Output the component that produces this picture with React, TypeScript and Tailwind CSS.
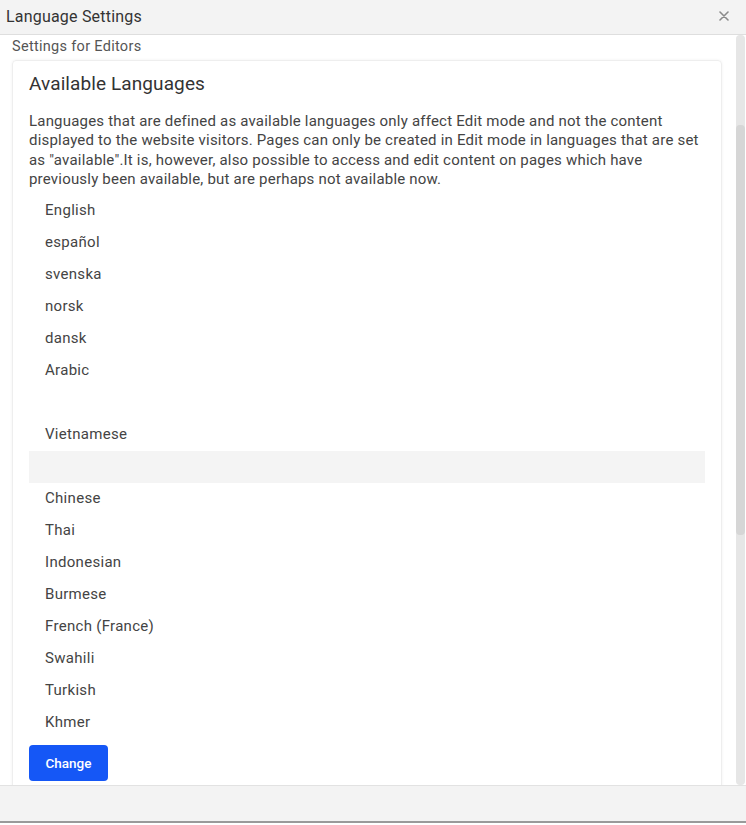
const languages = [
  'English',
  'español',
  'svenska',
  'norsk',
  'dansk',
  'Arabic',
  '',
  'Vietnamese',
  '',
  'Chinese',
  'Thai',
  'Indonesian',
  'Burmese',
  'French (France)',
  'Swahili',
  'Turkish',
  'Khmer',
];

// index of the row that shows the hover background
const hoverRow = 8;

export default function App(): JSX.Element {
  return (
    <div className="h-[825px] w-[746px] bg-white font-['Roboto',sans-serif] text-[#333] flex flex-col overflow-hidden">
      <div className="h-[35px] shrink-0 bg-[#f3f3f3] border-b border-[#dedede] flex items-center justify-between pl-[6px] pr-[17px]">
        <span className="text-[16px] tracking-[0.2px] text-[#333]">Language Settings</span>
        <svg width="10" height="10" viewBox="0 0 10 10" className="mb-[2px]">
          <path d="M1 1L9 9M9 1L1 9" stroke="#8a8a8a" strokeWidth="1.6" strokeLinecap="round" />
        </svg>
      </div>

      <div className="h-[750px] shrink-0 flex overflow-hidden">
        <div className="flex-1 overflow-hidden pl-[12px] pr-[14px]">
          <div className="text-[14.5px] tracking-[0.3px] text-[#555] pt-[2px] h-[25px] leading-[20px]">
            Settings for Editors
          </div>
          <div className="rounded-[4px] border border-[#eeeeee] shadow-[0_0_3px_rgba(0,0,0,0.06)] pl-[16px] pr-[16px] pt-[10px] pb-[20px]">
            <h2 className="text-[19px] tracking-[0.1px] text-[#333] leading-[26px] mb-[15px]">
              Available Languages
            </h2>
            <p className="text-[15px] tracking-[0.2px] leading-[19.4px] text-[#444] mb-[5px] whitespace-nowrap">
              Languages that are defined as available languages only affect Edit mode and not the content
              <br />
              displayed to the website visitors. Pages can only be created in Edit mode in languages that are set
              <br />
              as "available".It is, however, also possible to access and edit content on pages which have
              <br />
              previously been available, but are perhaps not available now.
            </p>
            <ul className="flex flex-col">
              {languages.map((lang, index) => (
                <li
                  key={index}
                  className={[
                    'h-[32px] flex items-center pl-[16px] text-[15px] tracking-[0.3px] text-[#444]',
                    index === hoverRow ? 'bg-[#f4f4f4]' : '',
                  ].join(' ')}
                >
                  {lang}
                </li>
              ))}
            </ul>
            <button className="mt-[6px] h-[36px] w-[79px] rounded-[4px] bg-[#1557f6] text-white text-[13.5px] font-medium">
              Change
            </button>
          </div>
        </div>
        <div className="w-[9px] shrink-0 mr-[1px] bg-[#e6e6e6] rounded-[4px] flex flex-col pt-[90px]">
          <div className="h-[410px] bg-[#d6d6d6] rounded-[4px]"></div>
        </div>
      </div>

      <div className="h-[38px] shrink-0 bg-[#f3f3f3] border-t border-[#e2e2e2] border-b-2 border-b-[#9a9a9a]"></div>
    </div>
  );
}
